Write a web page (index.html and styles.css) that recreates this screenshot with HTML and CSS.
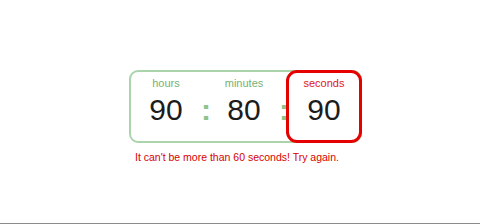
FILE: index.html
```html
<!DOCTYPE html>
<html lang="en">
<head>
  <meta charset="UTF-8">
  <meta name="viewport" content="width=device-width, initial-scale=1.0">
  <title>Time Input</title>
  <link rel="stylesheet" href="styles.css">
</head>
<body>
  <div class="page">
    <div class="timer">
      <div class="unit">
        <span class="label">hours</span>
        <span class="value">90</span>
      </div>
      <span class="colon">:</span>
      <div class="unit">
        <span class="label">minutes</span>
        <span class="value">80</span>
      </div>
      <span class="colon">:</span>
      <div class="unit invalid">
        <span class="label">seconds</span>
        <span class="value">90</span>
      </div>
    </div>
    <p class="error">It can't be more than 60 seconds! Try again.</p>
  </div>
</body>
</html>
```

FILE: styles.css
```css
* { box-sizing: border-box; }
body {
  margin: 0;
  font-family: "Liberation Sans", Arial, sans-serif;
  background: #fff;
}
.page {
  height: 224px;
  padding: 70px 0 0 129px;
  border-bottom: 1px solid #8a8a8a;
}
.timer {
  display: inline-flex;
  align-items: flex-start;
  height: 73px;
  border: 2px solid #acd4ac;
  border-radius: 9px;
}
.unit {
  display: flex;
  flex-direction: column;
  align-items: center;
  width: 70px;
  height: 69px;
  padding-top: 4px;
}
.label {
  font-size: 11px;
  line-height: 14px;
  color: #74b274;
}
.value {
  margin-top: 4px;
  font-size: 30px;
  line-height: 32px;
  color: #1c1c1c;
}
.colon {
  width: 8px;
  padding-top: 22px;
  font-size: 30px;
  font-weight: bold;
  line-height: 32px;
  text-align: center;
  color: #8cc48c;
}
.unit.invalid {
  width: 76px;
  height: 73px;
  margin: -2px -2px -2px -1px;
  padding-top: 3px;
  border: 3px solid #e60000;
  border-radius: 11px;
  background: #fff;
}
.unit.invalid .label {
  color: #e01818;
}
.error {
  margin: 7px 0 0 6px;
  font-size: 10.5px;
  line-height: 14px;
  color: #d80000;
}
```
